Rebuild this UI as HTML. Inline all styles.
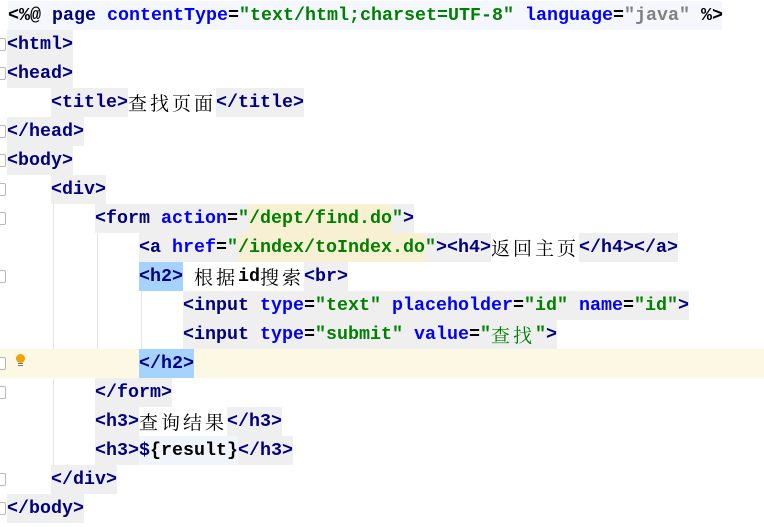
<!DOCTYPE html>
<html><head><meta charset="utf-8"><style>
body{margin:0;width:764px;height:527px;background:#fff;position:relative;overflow:hidden;font-family:"Liberation Mono",monospace;font-weight:bold;font-size:18.33px;}
.r{position:absolute;left:0;width:764px;height:29px;line-height:29px;white-space:pre;}
.r>span.c{position:absolute;top:0;height:29px;line-height:29px;}
.c span{display:inline-block;vertical-align:top;height:29px;line-height:29px;}
.t{background:#efefef}
.n{color:#000080}.a{color:#0000ff}.s{color:#008000}.k{color:#000}.g{color:#808080}
.y{background:#f8f0d2}
.b{background:#a6d2ff}
.cj{font-family:"Noto Serif CJK SC","Liberation Serif",serif;font-weight:normal;font-size:19px;letter-spacing:3px;color:#000}
.cjs{font-family:"Noto Serif CJK SC","Liberation Serif",serif;font-weight:normal;font-size:19px;letter-spacing:3px;color:#008000}
.gd{position:absolute;width:1px;background:#e4e4e4}
.f{position:absolute;left:-5px;width:9px;height:11px;border:1px solid #b8b8b8;border-radius:2px;background:#fff}
</style></head><body>
<div class="r" style="top:1px;"><span class="c" style="left:8px;background:#f4f8fe;width:714px"><span class="k">&lt;%@ </span><span class="n">page </span><span class="a">contentType</span><span class="k">=</span><span class="s">"text/html;charset=UTF-8"</span> <span class="a">language</span><span class="k">=</span><span class="g">"java"</span><span class="k"> %&gt;</span></span></div>

<div class="gd" style="left:53px;top:204px;height:261px"></div>
<div class="gd" style="left:97px;top:233px;height:174px"></div>
<div class="gd" style="left:141px;top:291px;height:58px"></div>

<div class="r" style="top:30px"><span class="c t n" style="left:7px">&lt;html&gt;</span></div>
<div class="r" style="top:59px"><span class="c t n" style="left:7px">&lt;head&gt;</span></div>
<div class="r" style="top:88px"><span class="c" style="left:51px"><span class="t n">&lt;title&gt;</span><span class="cj">查找页面</span><span class="t n">&lt;/title&gt;</span></span></div>
<div class="r" style="top:117px"><span class="c t n" style="left:7px">&lt;/head&gt;</span></div>
<div class="r" style="top:146px"><span class="c t n" style="left:7px">&lt;body&gt;</span></div>
<div class="r" style="top:175px"><span class="c t n" style="left:51px">&lt;div&gt;</span></div>
<div class="r" style="top:204px"><span class="c t" style="left:95px"><span class="n">&lt;form </span><span class="a">action</span><span class="k">=</span><span class="s">"<span class="y">/dept/find.do</span>"</span><span class="n">&gt;</span></span></div>
<div class="r" style="top:233px"><span class="c" style="left:139px"><span class="t"><span class="n">&lt;a </span><span class="a">href</span><span class="k">=</span><span class="s">"<span class="y">/index/toIndex.do</span>"</span><span class="n">&gt;&lt;h4&gt;</span></span><span class="cj">返回主页</span><span class="t n">&lt;/h4&gt;&lt;/a&gt;</span></span></div>
<div class="r" style="top:262px"><span class="c" style="left:139px"><span class="b n">&lt;h2&gt;</span><span> </span><span class="cj">根据</span><span class="k">id</span><span class="cj">搜索</span><span class="t n">&lt;br&gt;</span></span></div>
<div class="r" style="top:291px"><span class="c t" style="left:183px"><span class="n">&lt;input </span><span class="a">type</span><span class="k">=</span><span class="s">"text"</span><span> </span><span class="a">placeholder</span><span class="k">=</span><span class="s">"id"</span><span> </span><span class="a">name</span><span class="k">=</span><span class="s">"id"</span><span class="n">&gt;</span></span></div>
<div class="r" style="top:320px"><span class="c t" style="left:183px"><span class="n">&lt;input </span><span class="a">type</span><span class="k">=</span><span class="s">"submit"</span><span> </span><span class="a">value</span><span class="k">=</span><span class="s">"<span class="cjs">查找</span>"</span><span class="n">&gt;</span></span></div>
<div class="r" style="top:349px;background:#fdf8e4"><span class="c b n" style="left:139px">&lt;/h2&gt;</span></div>
<div class="r" style="top:378px"><span class="c t n" style="left:95px">&lt;/form&gt;</span></div>
<div class="r" style="top:407px"><span class="c" style="left:95px"><span class="t n">&lt;h3&gt;</span><span class="cj">查询结果</span><span class="t n">&lt;/h3&gt;</span></span></div>
<div class="r" style="top:436px"><span class="c" style="left:95px"><span class="t n">&lt;h3&gt;</span><span style="background:#f0f5fb"><span class="n">$</span><span class="k">{result}</span></span><span class="t n">&lt;/h3&gt;</span></span></div>
<div class="r" style="top:465px"><span class="c t n" style="left:51px">&lt;/div&gt;</span></div>
<div class="r" style="top:494px"><span class="c t n" style="left:7px">&lt;/body&gt;</span></div>

<div class="f" style="top:38px"></div><div class="f" style="top:67px"></div><div class="f" style="top:125px"></div>
<div class="f" style="top:154px"></div><div class="f" style="top:183px"></div><div class="f" style="top:212px"></div>
<div class="f" style="top:270px"></div><div class="f" style="top:357px"></div><div class="f" style="top:386px"></div>
<div class="f" style="top:473px"></div><div class="f" style="top:502px"></div>
<div style="position:absolute;left:16px;top:354px;width:9px;height:9px;border-radius:50%;background:#f0a30a"></div>
<div style="position:absolute;left:18px;top:363px;width:5px;height:1px;background:#777"></div>
<div style="position:absolute;left:18px;top:365px;width:5px;height:1px;background:#777"></div>
</body></html>
